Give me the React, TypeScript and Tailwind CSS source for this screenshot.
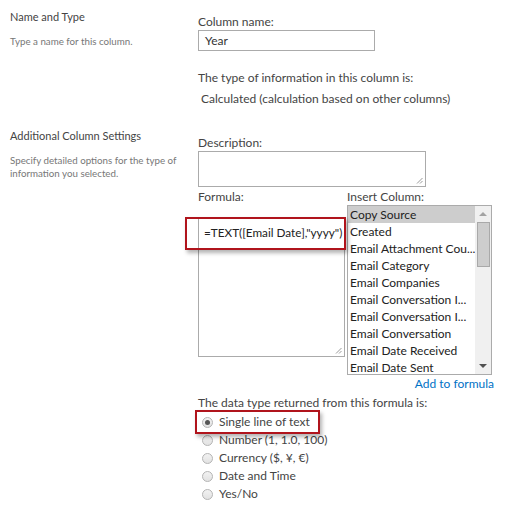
import React from "react";

const font = { fontFamily: 'Lato, "Open Sans", sans-serif' };

const columns = [
  "Copy Source",
  "Created",
  "Email Attachment Cou...",
  "Email Category",
  "Email Companies",
  "Email Conversation I...",
  "Email Conversation I...",
  "Email Conversation",
  "Email Date Received",
  "Email Date Sent",
];

const types = [
  "Single line of text",
  "Number (1, 1.0, 100)",
  "Currency ($, ¥, €)",
  "Date and Time",
  "Yes/No",
];

function Radio({ checked }: { checked?: boolean }) {
  return (
    <span className="w-[11px] h-[11px] rounded-full border border-[#b4b4b4] bg-gradient-to-b from-[#f2f2f2] to-[#e2e2e2] flex items-center justify-center">
      {checked && <span className="w-[5px] h-[5px] rounded-full bg-[#555]" />}
    </span>
  );
}

function Grip() {
  return (
    <svg width="7" height="7" viewBox="0 0 7 7" className="absolute right-[2px] bottom-[2px]">
      <path d="M6.5 1 L1 6.5 M6.5 4 L4 6.5" stroke="#999" strokeWidth="1" />
    </svg>
  );
}

export default function App() {
  return (
    <div style={font} className="w-[510px] h-[508px] bg-white text-[#444] text-[12px] relative overflow-hidden">
      {/* Name and Type */}
      <div className="flex">
        <div className="w-[198px] pl-[10px] pt-[8px]">
          <div className="text-[11px] leading-[17px]">Name and Type</div>
          <div className="mt-[10px] text-[9.75px] leading-[13px] text-[#777]">Type a name for this column.</div>
        </div>
        <div className="pt-[13px]">
          <div className="leading-[17px]">Column name:</div>
          <div className="w-[177px] h-[21px] border border-[#ababab] px-[6px] leading-[19px] text-[#333]">Year</div>
          <div className="mt-[18px] leading-[17px]">The type of information in this column is:</div>
          <div className="mt-[4px] pl-[3px] leading-[17px]">Calculated (calculation based on other columns)</div>
        </div>
      </div>

      {/* Additional Column Settings */}
      <div className="flex">
        <div className="w-[198px] pl-[10px] pt-[20px]">
          <div className="text-[11px] leading-[17px]">Additional Column Settings</div>
          <div className="mt-[10px] w-[170px] text-[9.75px] leading-[13px] text-[#777]">
            Specify detailed options for the type of information you selected.
          </div>
        </div>
        <div className="pt-[27px]">
          <div className="leading-[17px]">Description:</div>
          <div className="relative w-[228px] h-[36px] border border-[#ababab]">
            <Grip />
          </div>

          <div className="mt-[1px] flex gap-[2px]">
            <div className="w-[147px]">
              <div className="leading-[17px]">Formula:</div>
              <div className="relative mt-[13px] h-[139px] border border-[#ababab]">
                <div className="pl-[5px] pt-[5px] leading-[17px] text-[11.75px] text-[#222] whitespace-nowrap">=TEXT([Email Date],"yyyy")</div>
                <Grip />
              </div>
            </div>
            <div className="w-[145px]">
              <div className="leading-[17px]">Insert Column:</div>
              <div className="flex h-[170px] border border-[#ababab] text-[#222]">
                <div className="flex-1 overflow-hidden">
                  {columns.map((c, i) => (
                    <div
                      key={i}
                      className={`h-[17px] leading-[17px] pl-[2px] whitespace-nowrap ${i === 0 ? "bg-[#cdcdcd]" : ""}`}
                    >
                      {c}
                    </div>
                  ))}
                </div>
                <div className="w-[16px] bg-[#f0f0f0] flex flex-col items-center">
                  <div className="h-[16px] flex items-center justify-center">
                    <span className="w-0 h-0 border-l-[4px] border-r-[4px] border-b-[4px] border-l-transparent border-r-transparent border-b-[#a3a3a3]" />
                  </div>
                  <div className="w-[13px] h-[45px] bg-[#cdcdcd] border border-[#a9a9a9]" />
                  <div className="flex-1" />
                  <div className="h-[16px] flex items-center justify-center">
                    <span className="w-0 h-0 border-l-[4px] border-r-[4px] border-t-[4px] border-l-transparent border-r-transparent border-t-[#505050]" />
                  </div>
                </div>
              </div>
              <div className="text-right leading-[17px] text-[#0072c6] mr-[-2px]">Add to formula</div>
            </div>
          </div>

          <div className="mt-[2px] leading-[17px]">The data type returned from this formula is:</div>
          <div className="mt-[2px]">
            {types.map((t, i) => (
              <div key={i} className="h-[18px] flex items-center gap-[6px] pl-[4px] leading-[18px]">
                <Radio checked={i === 0} />
                <span>{t}</span>
              </div>
            ))}
          </div>
        </div>
      </div>

      {/* annotation boxes */}
      <div className="absolute left-[185px] top-[217px] w-[161px] h-[33px] border-[2.5px] border-[#b0141c] shadow-[2px_3px_4px_rgba(0,0,0,0.3)]" />
      <div className="absolute left-[195px] top-[410px] w-[125px] h-[24px] border-[2.5px] border-[#b0141c] shadow-[2px_3px_4px_rgba(0,0,0,0.3)]" />
    </div>
  );
}
